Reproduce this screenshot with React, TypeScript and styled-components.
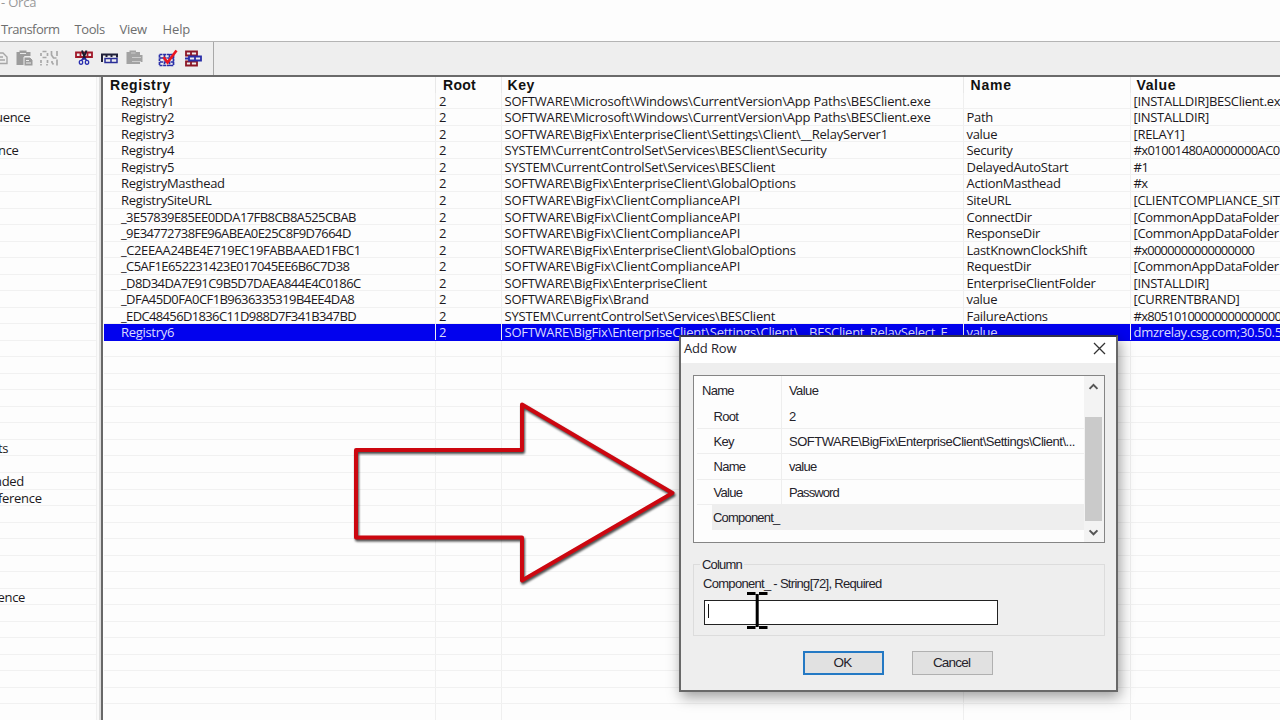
import React from "react";
import styled, { createGlobalStyle } from "styled-components";

const ui = `"Open Sans", "Noto Sans", sans-serif`;
const classic = `"Liberation Sans", Arial, sans-serif`;

const Global = createGlobalStyle`
  * { box-sizing: border-box; }
  html, body { margin: 0; padding: 0; overflow: hidden; }
`;

const Window = styled.div`
  position: relative;
  width: 1280px;
  height: 720px;
  overflow: hidden;
  display: flex;
  flex-direction: column;
  background: #fdfdfd;
  font-family: ${ui};
  font-size: 13px;
  color: #1c1820;
`;

const TitleBar = styled.div`
  height: 16px;
  flex: none;
  padding-left: 1px;
  line-height: 18px;
  margin-top: -7px;
  letter-spacing: -0.2px;
  color: #999;
`;

const MenuBar = styled.nav`
  height: 32px;
  flex: none;
  display: flex;
  align-items: center;
  padding: 8px 0 1px 1px;
  gap: 17px;
  color: #6e6e6e;
`;

const MenuItem = styled.span<{ $w: number; $ls: number }>`
  width: ${(p) => p.$w}px;
  white-space: nowrap;
  letter-spacing: ${(p) => p.$ls}px;
`;

const Toolbar = styled.div`
  height: 36px;
  flex: none;
  display: flex;
  background: #eeeeee;
  border-top: 1px solid #b4b4b4;
  border-bottom: 2px solid #6a6a6a;
`;

const ToolGroup = styled.div`
  width: 214px;
  border-right: 1px solid #a8a8a8;
`;

const Body = styled.div`
  flex: 1;
  display: flex;
  min-height: 0;
`;

const TablesPane = styled.aside`
  width: 97px;
  flex: none;
  padding-top: 15.8px;
  border-right: 1px solid #f0f0f0;
  overflow: hidden;
`;

const TableName = styled.div<{ $shift?: number }>`
  height: 16.54px;
  line-height: 17.5px;
  border-bottom: 1px solid #f1f1f1;
  white-space: nowrap;
  letter-spacing: -0.3px;
  text-indent: ${(p) => p.$shift ?? 0}px;
`;

const Splitter = styled.div`
  width: 7px;
  flex: none;
  background: linear-gradient(90deg, #fafafa 0 2px, #dedede 2px 4px, #686868 4px 6px, #fdfdfd 6px);
`;

const Grid = styled.main`
  flex: 1;
  min-width: 0;
  overflow: hidden;
`;

const columns = "332px 65.5px 462px 167px 1fr";

const HeadRow = styled.div`
  height: 15.8px;
  display: grid;
  grid-template-columns: ${columns};
  font: bold 14px/17px ${classic};
  color: #111;
`;

const HeadCell = styled.div<{ $pad: number; $ls: number }>`
  padding-left: ${(p) => p.$pad}px;
  letter-spacing: ${(p) => p.$ls}px;
  white-space: nowrap;
  border-right: 1px solid #e8e8e8;
  &:last-child { border-right: none; }
`;

const Row = styled.div<{ $selected?: boolean }>`
  height: 16.54px;
  display: grid;
  grid-template-columns: ${columns};
  line-height: 17.5px;
  color: ${(p) => (p.$selected ? "#dcdcff" : "inherit")};
  background: ${(p) => (p.$selected ? "#0202ee" : "transparent")};
  border-bottom: 1px solid ${(p) => (p.$selected ? "#0202ee" : "#f1f1f1")};
`;

const Cell = styled.div<{ $first?: boolean; $ls: number }>`
  padding-left: ${(p) => (p.$first ? 17 : 3)}px;
  letter-spacing: ${(p) => p.$ls}px;
  white-space: pre;
  overflow: hidden;
  border-right: 1px solid #efefef;
  &:last-child { border-right: none; }
`;

const Callout = styled.svg`
  position: absolute;
  left: 345px;
  top: 395px;
  filter: drop-shadow(1.5px 2px 1px rgba(0, 0, 0, 0.7));
`;

const Dialog = styled.section`
  position: absolute;
  left: 679px;
  top: 335px;
  width: 439px;
  height: 357px;
  display: flex;
  flex-direction: column;
  background: #eeeeee;
  border: 2px solid #686868;
  border-top-color: #33334a;
  box-shadow: 2px 5px 13px rgba(0, 0, 0, 0.38);
  font: 13px/17px ${classic};
  color: #25232b;
`;

const DialogTitle = styled.header`
  height: 26px;
  flex: none;
  display: flex;
  justify-content: space-between;
  padding: 3px 10px 0 3px;
  background: #fff;
  font-family: ${ui};
  letter-spacing: -0.15px;
`;

const ListBox = styled.div`
  width: 412px;
  height: 168px;
  flex: none;
  margin: 12px 0 0 12px;
  display: flex;
  background: #fdfdfd;
  border: 1px solid #858585;
`;

const FieldList = styled.div`
  flex: 1;
  padding-left: 3px;
  overflow: hidden;
`;

const FieldRow = styled.div<{ $head?: boolean; $active?: boolean }>`
  height: ${(p) => (p.$head ? 27.5 : 25.4)}px;
  display: grid;
  grid-template-columns: ${(p) => (p.$active ? "1fr" : "85px 1fr")};
  line-height: ${(p) => (p.$head ? 29 : 26.4)}px;
  margin-left: ${(p) => (p.$active ? 15 : 0)}px;
  background: ${(p) => (p.$active ? "#eeeeee" : "transparent")};
  border-bottom: 1px solid ${(p) => (p.$head ? "transparent" : "#eeeeee")};
`;

const FieldCell = styled.span<{ $pad: number; $ls?: number; $line?: boolean }>`
  padding-left: ${(p) => p.$pad}px;
  letter-spacing: ${(p) => p.$ls ?? -0.7}px;
  white-space: nowrap;
  border-right: ${(p) => (p.$line ? "1px solid #eeeeee" : "none")};
`;

const ScrollBar = styled.div`
  width: 20px;
  flex: none;
  display: flex;
  flex-direction: column;
  justify-content: space-between;
  align-items: center;
  padding: 0 2px 0 1px;
  background: #f3f3f3;
`;

const Thumb = styled.div`
  width: 17px;
  height: 106px;
  margin-top: 20px;
  background: #cacaca;
`;

const ColumnGroup = styled.fieldset`
  width: 412px;
  height: 80px;
  flex: none;
  margin: 13px 0 0 12px;
  padding: 0 0 0 9px;
  border: 1px solid #dcdcdc;
`;

const Legend = styled.legend`
  margin-left: -3px;
  padding: 0 2px;
  line-height: 17px;
  letter-spacing: -0.8px;
`;

const ColumnLabel = styled.div`
  margin-top: 2px;
  line-height: 17px;
  letter-spacing: -0.7px;
`;

const TextInput = styled.div`
  width: 294px;
  height: 25px;
  margin: 8px 0 0 1px;
  padding: 3px;
  background: #fff;
  border: 1px solid #222;
`;

const Caret = styled.div`
  width: 1px;
  height: 14px;
  background: #111;
`;

const Buttons = styled.footer`
  display: flex;
  gap: 28px;
  padding: 15px 0 0 122px;
`;

const Button = styled.button<{ $primary?: boolean }>`
  width: 81px;
  height: 24px;
  padding: 0 2px 0 0;
  background: #e1e1e1;
  border: ${(p) => (p.$primary ? "2px solid #2479c4" : "1px solid #b0b0b0")};
  font: 13.5px/18px ${classic};
  letter-spacing: -0.8px;
  color: #25232b;
`;

const Pointer = styled.svg`
  position: absolute;
  left: 746px;
  top: 591px;
`;

const rows: string[][] = [
  ["Registry1", "2", "SOFTWARE\\Microsoft\\Windows\\CurrentVersion\\App Paths\\BESClient.exe", "", "[INSTALLDIR]BESClient.exe"],
  ["Registry2", "2", "SOFTWARE\\Microsoft\\Windows\\CurrentVersion\\App Paths\\BESClient.exe", "Path", "[INSTALLDIR]"],
  ["Registry3", "2", "SOFTWARE\\BigFix\\EnterpriseClient\\Settings\\Client\\__RelayServer1", "value", "[RELAY1]"],
  ["Registry4", "2", "SYSTEM\\CurrentControlSet\\Services\\BESClient\\Security", "Security", "#x01001480A0000000AC0"],
  ["Registry5", "2", "SYSTEM\\CurrentControlSet\\Services\\BESClient", "DelayedAutoStart", "#1"],
  ["RegistryMasthead", "2", "SOFTWARE\\BigFix\\EnterpriseClient\\GlobalOptions", "ActionMasthead", "#x"],
  ["RegistrySiteURL", "2", "SOFTWARE\\BigFix\\ClientComplianceAPI", "SiteURL", "[CLIENTCOMPLIANCE_SIT"],
  ["_3E57839E85EE0DDA17FB8CB8A525CBAB", "2", "SOFTWARE\\BigFix\\ClientComplianceAPI", "ConnectDir", "[CommonAppDataFolder"],
  ["_9E34772738FE96ABEA0E25C8F9D7664D", "2", "SOFTWARE\\BigFix\\ClientComplianceAPI", "ResponseDir", "[CommonAppDataFolder"],
  ["_C2EEAA24BE4E719EC19FABBAAED1FBC1", "2", "SOFTWARE\\BigFix\\EnterpriseClient\\GlobalOptions", "LastKnownClockShift", "#x0000000000000000"],
  ["_C5AF1E652231423E017045EE6B6C7D38", "2", "SOFTWARE\\BigFix\\ClientComplianceAPI", "RequestDir", "[CommonAppDataFolder"],
  ["_D8D34DA7E91C9B5D7DAEA844E4C0186C", "2", "SOFTWARE\\BigFix\\EnterpriseClient", "EnterpriseClientFolder", "[INSTALLDIR]"],
  ["_DFA45D0FA0CF1B9636335319B4EE4DA8", "2", "SOFTWARE\\BigFix\\Brand", "value", "[CURRENTBRAND]"],
  ["_EDC48456D1836C11D988D7F341B347BD", "2", "SYSTEM\\CurrentControlSet\\Services\\BESClient", "FailureActions", "#x805101000000000000000"],
  ["Registry6", "2", "SOFTWARE\\BigFix\\EnterpriseClient\\Settings\\Client\\__BESClient_RelaySelect_F...", "value", "dmzrelay.csg.com;30.50.5"],
];

const emptyRow = ["", "", "", "", ""];
const allRows = [...rows, ...Array.from({ length: 24 }, () => emptyRow)];

// Digit-heavy identifiers are set tighter than words and paths.
const tracking = (text: string, column: number) => {
  if (text.startsWith("_ED")) return -0.64;
  if (text.startsWith("_C2")) return -0.4;
  if (text.startsWith("_")) return -0.57;
  if (text.startsWith("#x0100")) return -0.6;
  if (text.startsWith("#x")) return -0.74;
  if (text.endsWith("ComplianceAPI")) return -0.04;
  if (text.endsWith("...")) return -0.25;
  return column === 2 ? -0.2 : -0.3;
};

const headings: [string, number, number][] = [
  ["Registry", 6, 0.6],
  ["Root", 7, 0.3],
  ["Key", 6, 0.6],
  ["Name", 7, 0.8],
  ["Value", 6, 0.6],
];

const tableNames: Record<number, [string, number]> = {
  1: ["uence", -5],
  3: ["nce", -2],
  21: ["ts", -2],
  23: ["nded", -6],
  24: ["ference", -2],
  30: ["ence", -2.5],
};

const ToolIcons = () => (
  <svg width="213" height="33" viewBox="0 42 213 33">
    <path d="M-3 53H3L7 57V63.5H-3M0 57H3M0 60H5" fill="none" stroke="#a6a6a6" strokeWidth="1.4" />
    <g fill="#9c9c9c">
      <path d="M16.5 52h3v-1.5h7v1.5h4v4h-6v9h-8z" />
      <path d="M24 57h6l3 3v6h-9z" stroke="#eee" strokeWidth="1" />
    </g>
    <path d="M20 53.5h6" stroke="#e8e8e8" />
    <path d="M26 60.5h3M26 63h5" stroke="#eee" />
    <g fill="none" stroke="#a8a8a8" strokeWidth="1.7">
      <path d="M42.5 51.500h4M41 53v3M47.500 53v3M42.500 57.500h4M41 60v3M47.500 60v3" />
      <path d="M41 64v1.500M47 64v1.500M51.500 51v4l2 3h3M57 51v5M52 61v1.500l1.500 2M57 59.500v6" />
    </g>
    <g fill="none">
      <path d="M76 52.5h16v4.5H76zM80.5 52.5v4M87.5 52.5v4" stroke="#a01828" strokeWidth="1.8" />
      <path d="M82 50.5l3.5 9M86.5 50.5l-3.5 9" stroke="#1c1a2c" strokeWidth="2" />
      <path d="M83.5 58l-2 2.5M84.5 58l2 2.5" stroke="#292eb0" strokeWidth="1.6" />
      <ellipse cx="81" cy="62.3" rx="1.7" ry="2" stroke="#292eb0" strokeWidth="1.3" />
      <ellipse cx="87" cy="62.3" rx="1.7" ry="2" stroke="#292eb0" strokeWidth="1.3" />
      <path d="M102 62V54.5h15v3M106.5 54v3M111.5 54v3" stroke="#20203a" strokeWidth="2" />
      <path d="M105 58.5h12v4h-12zM111 58v4" stroke="#292e98" strokeWidth="1.5" />
    </g>
    <path d="M126.5 52h3v-1.5h6.5v1.5h4v3h2.5v7h-2.5v2h-13.5z" fill="#a2a2a2" />
    <path d="M131 53h4.500M132 57.500h9M132 61.500h9" stroke="#cccccc" />
    <g fill="none">
      <path d="M159.5 54.5h14v11h-14zM160 58h14M160 62h14M164.5 54v12M169.5 54v12" stroke="#292ea8" strokeWidth="1.7" strokeDasharray="3 .6" />
      <path d="M163.5 57l4 5.5 9-12" stroke="#ec1420" strokeWidth="2.6" />
      <path d="M186 51.5h11v4h-11zM191 51.5v4M186 61.5h11v4h-11zM191 61.5v4" stroke="#8b1625" strokeWidth="1.8" />
      <path d="M189 56.5h12v4h-12zM195 56.5v4M185 58.5h4" stroke="#292ea8" strokeWidth="1.8" />
    </g>
  </svg>
);

const Chevron = ({ down }: { down?: boolean }) => (
  <svg width="17" height="21" viewBox="0 0 17 21">
    <path d={down ? "M4.5 9.5l4 4 4-4" : "M4.5 13l4-4 4 4"} fill="none" stroke="#555" strokeWidth="2" />
  </svg>
);

const fields: [string, string, number][] = [
  ["Root", "2", -0.6],
  ["Key", "SOFTWARE\\BigFix\\EnterpriseClient\\Settings\\Client\\...", -0.48],
  ["Name", "value", -0.7],
  ["Value", "Password", -0.9],
];

export default function App() {
  return (
    <>
      <Global />
      <Window>
        <TitleBar>- Orca</TitleBar>
        <MenuBar>
          <MenuItem $w={56.5} $ls={-0.55}>Transform</MenuItem>
          <MenuItem $w={28} $ls={-0.4}>Tools</MenuItem>
          <MenuItem $w={26} $ls={-0.25}>View</MenuItem>
          <MenuItem $w={30} $ls={-0.1}>Help</MenuItem>
        </MenuBar>
        <Toolbar>
          <ToolGroup><ToolIcons /></ToolGroup>
        </Toolbar>
        <Body>
          <TablesPane>
            {allRows.map((_, i) => (
              <TableName key={i} $shift={tableNames[i]?.[1]}>{tableNames[i]?.[0]}</TableName>
            ))}
          </TablesPane>
          <Splitter />
          <Grid>
            <HeadRow>
              {headings.map(([h, pad, ls]) => <HeadCell key={h} $pad={pad} $ls={ls}>{h}</HeadCell>)}
            </HeadRow>
            {allRows.map((r, i) => (
              <Row key={i} $selected={i === 14}>
                {r.map((c, j) => <Cell key={j} $first={j === 0} $ls={tracking(c, j)}>{c}</Cell>)}
              </Row>
            ))}
          </Grid>
        </Body>
        <Callout width="340" height="200" viewBox="345 395 340 200">
          <path d="M356 450H522V404.5L672.5 493 522 580.5V537.5H356Z" fill="none" stroke="#cc0710" strokeWidth="4" strokeLinejoin="round" />
        </Callout>
        <Dialog>
          <DialogTitle>
            Add Row
            <svg width="13" height="17" viewBox="0 0 13 17"><path d="M1 3l11 11M12 3L1 14" stroke="#333" strokeWidth="1.3" /></svg>
          </DialogTitle>
          <ListBox>
            <FieldList>
              <FieldRow $head>
                <FieldCell $pad={5} $line>Name</FieldCell>
                <FieldCell $pad={7} $ls={-0.6}>Value</FieldCell>
              </FieldRow>
              {fields.map(([n, v, ls]) => (
                <FieldRow key={n}>
                  <FieldCell $pad={16.5} $ls={-0.7} $line>{n}</FieldCell>
                  <FieldCell $pad={7} $ls={ls}>{v}</FieldCell>
                </FieldRow>
              ))}
              <FieldRow $active><FieldCell $pad={1} $ls={-0.8}>Component_</FieldCell></FieldRow>
            </FieldList>
            <ScrollBar>
              <Chevron />
              <Thumb />
              <Chevron down />
            </ScrollBar>
          </ListBox>
          <ColumnGroup>
            <Legend>Column</Legend>
            <ColumnLabel>Component_ - String[72], Required</ColumnLabel>
            <TextInput><Caret /></TextInput>
          </ColumnGroup>
          <Buttons>
            <Button $primary>OK</Button>
            <Button>Cancel</Button>
          </Buttons>
        </Dialog>
        <Pointer width="23" height="40" viewBox="0 0 23 40">
          <path d="M1 2.5H9.5M13 2.5H21.5M11.2 3V36M1 36.5H9.5M13 36.5H21.5" fill="none" stroke="#000" strokeWidth="3" />
        </Pointer>
      </Window>
    </>
  );
}
